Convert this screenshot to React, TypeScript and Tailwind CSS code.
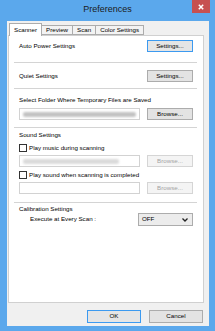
import type { ReactNode } from "react";

function WinButton({
  children,
  disabled,
  focused,
  className = "w-[46px]",
}: {
  children: ReactNode;
  disabled?: boolean;
  focused?: boolean;
  className?: string;
}) {
  const look = disabled
    ? "border-[#d5d5d5] bg-[#f4f4f4] text-[#a3a3a3]"
    : focused
    ? "border-[#3c9af0] bg-[#e5e5e5] text-black"
    : "border-[#acacac] bg-[#e3e3e3] text-black";
  return (
    <div
      className={`h-[12px] border flex items-center justify-center text-[6.2px] leading-none ${look} ${className}`}
    >
      {children}
    </div>
  );
}

function Field({ blurWidth, light }: { blurWidth?: string; light?: boolean }) {
  return (
    <div className="h-[12px] w-[121px] border border-[#d2d2d2] bg-white flex items-center px-[3px]">
      {blurWidth && (
        <div
          className={`h-[5px] rounded-[2px] blur-[1px] ${blurWidth} ${
            light ? "bg-[#dadada]" : "bg-[#c2c2c2]"
          }`}
        />
      )}
    </div>
  );
}

function Separator({ className = "" }: { className?: string }) {
  return <div className={`h-px bg-[#d4d4d4] mx-[5px] mr-[6px] ${className}`} />;
}

function Checkbox({ label, className = "" }: { label: string; className?: string }) {
  return (
    <div className={`h-[10px] flex items-center gap-[2px] px-[10px] ${className}`}>
      <div className="w-[8px] h-[8px] border border-[#333] bg-white" />
      <span className="text-[6.2px] leading-none text-black">{label}</span>
    </div>
  );
}

const tabs = ["Scanner", "Preview", "Scan", "Color Settings"];

export default function App() {
  return (
    <div className="w-[215px] h-[331px] bg-[#5ba8ec] flex flex-col font-['Liberation_Sans',Arial,sans-serif] overflow-hidden">
      {/* title bar */}
      <div className="relative h-[21px] flex items-center justify-center pb-[3px]">
        <span className="text-[9px] leading-none text-[#1b1b1b]">Preferences</span>
        <div className="absolute right-[5px] top-0 w-[18px] h-[13px] bg-[#c75050] flex items-center justify-center">
          <svg width="6" height="6" viewBox="0 0 6 6">
            <path d="M0.8 0.8 L5.2 5.2 M5.2 0.8 L0.8 5.2" stroke="#fff" strokeWidth="1.5" />
          </svg>
        </div>
      </div>

      {/* client area */}
      <div className="flex-1 ml-[7px] mr-[6px] mb-[5px] bg-[#f0f0f0] flex flex-col pt-[2px] pl-[1px] pr-[5px]">
        {/* tabs */}
        <div className="flex items-end h-[12px] pl-[1px] relative z-10">
          {tabs.map((t, i) => (
            <div
              key={t}
              className={
                i === 0
                  ? "h-[13px] -mb-px px-[4px] bg-white border border-b-0 border-[#acacac] flex items-center text-[6.2px] leading-none text-black"
                  : "h-[10px] px-[4px] bg-[#f3f3f3] border border-l-0 border-[#acacac] flex items-center text-[6.2px] leading-none text-black"
              }
            >
              {t}
            </div>
          ))}
        </div>

        {/* panel */}
        <div className="flex-1 bg-white border border-[#d0d0d0] flex flex-col pt-[4px]">
          <div className="h-[12px] flex items-center justify-between px-[10px]">
            <span className="text-[6.2px] leading-none text-black">Auto Power Settings</span>
            <WinButton focused>Settings...</WinButton>
          </div>
          <Separator className="mt-[10px]" />

          <div className="h-[12px] mt-[7px] flex items-center justify-between px-[10px]">
            <span className="text-[6.2px] leading-none text-black">Quiet Settings</span>
            <WinButton>Settings...</WinButton>
          </div>
          <Separator className="mt-[6px]" />

          <div className="h-[10px] mt-[6px] flex items-center px-[10px]">
            <span className="text-[6.2px] leading-none text-black">
              Select Folder Where Temporary Files are Saved
            </span>
          </div>
          <div className="h-[12px] mt-[3px] flex items-center justify-between px-[10px]">
            <Field blurWidth="w-[114px]" />
            <WinButton>Browse...</WinButton>
          </div>
          <Separator className="mt-[7px]" />

          <div className="h-[10px] mt-[2px] flex items-center px-[10px]">
            <span className="text-[6.2px] leading-none text-black">Sound Settings</span>
          </div>
          <Checkbox label="Play music during scanning" className="mt-[3px]" />
          <div className="h-[12px] mt-[2px] flex items-center justify-between px-[10px]">
            <Field blurWidth="w-[96px]" light />
            <WinButton disabled>Browse...</WinButton>
          </div>
          <Checkbox label="Play sound when scanning is completed" className="mt-[3px]" />
          <div className="h-[12px] mt-[2px] flex items-center justify-between px-[10px]">
            <Field />
            <WinButton disabled>Browse...</WinButton>
          </div>
          <Separator className="mt-[8px]" />

          <div className="h-[8px] mt-[2px] flex items-center px-[10px]">
            <span className="text-[6.2px] leading-none text-black">Calibration Settings</span>
          </div>
          <div className="h-[13px] flex items-center justify-between px-[10px]">
            <span className="ml-[11px] text-[6.2px] leading-none text-black">
              Execute at Every Scan :
            </span>
            <div className="w-[55px] h-[13px] border border-[#acacac] bg-[#ececec] flex items-center justify-between pl-[3px] pr-[4px]">
              <span className="text-[6.2px] leading-none text-black">OFF</span>
              <svg width="6" height="4" viewBox="0 0 6 4">
                <path d="M0.5 0.5 L3 3 L5.5 0.5" stroke="#222" strokeWidth="1.3" fill="none" />
              </svg>
            </div>
          </div>
        </div>

        {/* dialog buttons */}
        <div className="h-[13px] mt-[7px] mb-[3px] flex justify-end gap-[8px] pr-px">
          <WinButton focused className="w-[54px] h-[13px]">OK</WinButton>
          <WinButton className="w-[54px] h-[13px]">Cancel</WinButton>
        </div>
      </div>
    </div>
  );
}
